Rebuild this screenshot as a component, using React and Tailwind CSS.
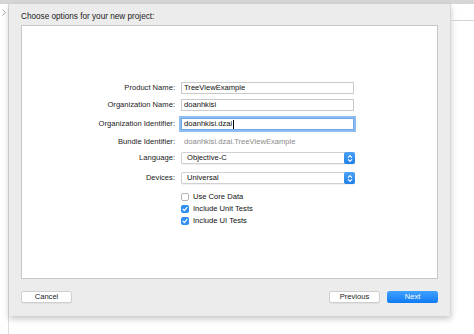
import React from "react";

const font = { fontFamily: '"Liberation Sans", Arial, sans-serif' };

function Field({ value, focused }) {
  return (
    <div
      className={
        "h-[12px] w-[173px] bg-white flex items-center pl-[2px] text-[7.6px] leading-none text-[#111] " +
        (focused
          ? "border border-[#6ea7e6] shadow-[0_0_0_2px_#8fbdf0]"
          : "border border-[#c9c9c9]")
      }
    >
      <span>{value}</span>
      {focused && <span className="w-[1px] h-[9px] bg-black ml-[0.5px]" />}
    </div>
  );
}

function Popup({ value }) {
  return (
    <div className="h-[12px] w-[174px] bg-white border border-[#d0d0d0] rounded-[2px] flex items-center pl-[5px] text-[7.6px] leading-none text-[#111] shadow-[0_0.5px_0.5px_rgba(0,0,0,0.12)]">
      <span className="flex-1">{value}</span>
      <div className="h-[12px] w-[11px] -mr-[1px] rounded-[2px] bg-gradient-to-b from-[#4aa3f7] to-[#1f7fe8] flex items-center justify-center">
        <svg width="6" height="9" viewBox="0 0 6 9" fill="none" stroke="white" strokeWidth="1.1" strokeLinecap="round" strokeLinejoin="round">
          <path d="M1.3 3.3 L3 1.6 L4.7 3.3" />
          <path d="M1.3 5.7 L3 7.4 L4.7 5.7" />
        </svg>
      </div>
    </div>
  );
}

function Check({ checked, label }) {
  return (
    <div className="flex items-center h-[12px]">
      {checked ? (
        <div className="w-[8px] h-[8px] rounded-[2px] bg-[#2f8ef2] flex items-center justify-center">
          <svg width="6" height="6" viewBox="0 0 6 6" fill="none" stroke="white" strokeWidth="1.2" strokeLinecap="round" strokeLinejoin="round">
            <path d="M1 3.2 L2.4 4.6 L5 1.4" />
          </svg>
        </div>
      ) : (
        <div className="w-[8px] h-[8px] rounded-[2px] bg-white border border-[#b5b5b5]" />
      )}
      <span className="ml-[4px] text-[7.6px] leading-none text-[#111]">{label}</span>
    </div>
  );
}

function Row({ label, children, className = "" }) {
  return (
    <div className={"flex items-center text-[7.6px] leading-none " + className}>
      <div className="w-[86px] text-right text-[#222] whitespace-nowrap">{label}</div>
      <div className="ml-[6px] flex items-center">{children}</div>
    </div>
  );
}

function Button({ children, primary }) {
  return primary ? (
    <div className="w-[51px] h-[12px] rounded-[2.5px] bg-gradient-to-b from-[#3fa2ff] to-[#0b7af2] flex items-center justify-center text-[7.6px] leading-none text-white">
      {children}
    </div>
  ) : (
    <div className="w-[51px] h-[12px] rounded-[2.5px] bg-white border border-[#cfcfcf] shadow-[0_0.5px_0.5px_rgba(0,0,0,0.1)] flex items-center justify-center text-[7.6px] leading-none text-[#222]">
      {children}
    </div>
  );
}

export default function App() {
  return (
    <div className="w-[474px] h-[334px] bg-white overflow-hidden flex flex-col" style={font}>
      <div className="h-[4px] bg-[#d6d6d6] shrink-0" />
      <div className="flex flex-1 items-start">
        <div className="w-[9px] self-stretch border-r border-[#dcdcdc] flex justify-center">
          <svg className="mt-[5px]" width="4" height="7" viewBox="0 0 4 7" fill="none" stroke="#9a9a9a" strokeWidth="0.9" strokeLinecap="round" strokeLinejoin="round">
            <path d="M0.8 0.8 L3.2 3.5 L0.8 6.2" />
          </svg>
        </div>
        <div className="w-[442px] bg-[#ececec] border-r border-[#d8d8d8] shadow-[0_3px_6px_rgba(0,0,0,0.22)] px-[12px] flex flex-col">
          <div className="h-[21px] flex items-end pb-[2px] text-[8.2px] text-[#1a1a1a]">
            Choose options for your new project:
          </div>
          <div className="h-[254px] bg-white border border-[#c6c6c6] pt-[56px] pl-[67px]">
            <Row label="Product Name:">
              <Field value="TreeViewExample" />
            </Row>
            <Row label="Organization Name:" className="mt-[5px]">
              <Field value="doanhkisi" />
            </Row>
            <Row label="Organization Identifier:" className="mt-[7px]">
              <Field value="doanhkisi.dzai" focused />
            </Row>
            <Row label="Bundle Identifier:" className="mt-[6px] h-[12px]">
              <span className="pl-[3px] text-[#8a8a8a]">doanhkisi.dzai.TreeViewExample</span>
            </Row>
            <Row label="Language:" className="mt-[4px]">
              <Popup value="Objective-C" />
            </Row>
            <Row label="Devices:" className="mt-[8px]">
              <Popup value="Universal" />
            </Row>
            <div className="ml-[92px] mt-[7px] flex flex-col">
              <Check label="Use Core Data" />
              <Check checked label="Include Unit Tests" />
              <Check checked label="Include UI Tests" />
            </div>
          </div>
          <div className="flex items-center mt-[12px] mb-[13px]">
            <Button>Cancel</Button>
            <div className="flex-1" />
            <Button>Previous</Button>
            <div className="w-[7px]" />
            <Button primary>Next</Button>
          </div>
        </div>
        <div className="flex-1 self-stretch">
          <div className="h-[17px] border-b border-[#d4d4d4]" />
        </div>
      </div>
    </div>
  );
}
